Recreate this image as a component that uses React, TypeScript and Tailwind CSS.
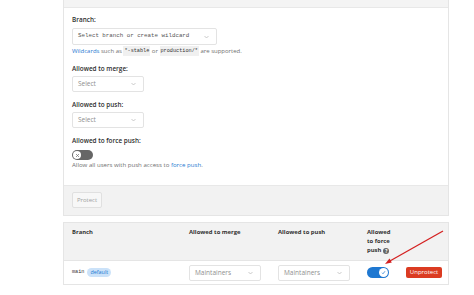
import React from "react";

const sans = { fontFamily: '"Open Sans", "Noto Sans", sans-serif' } as const;

function Caret() {
  return (
    <svg width="5" height="4" viewBox="0 0 10 6" className="shrink-0">
      <path d="M1 1l4 4 4-4" fill="none" stroke="#b5b5b5" strokeWidth="1.4" />
    </svg>
  );
}

function SmallSelect({ label, w }: { label: string; w: string }) {
  return (
    <div className={`${w} h-[16px] flex items-center justify-between border border-[#e3e3e3] rounded-[2px] bg-white pl-[5px] pr-[7px]`}>
      <span className="text-[6.5px] text-[#8f8f8f]">{label}</span>
      <Caret />
    </div>
  );
}

export default function App() {
  return (
    <div className="relative w-[474px] h-[295px] bg-white overflow-hidden text-[#2e2e2e]" style={sans}>
      <div className="ml-[63px] w-[386px]">
        {/* Top panel */}
        <div className="border-x border-b border-[#e5e5e5]">
          <div className="h-[8px] bg-[#f4f4f4] border-b border-[#e8e8e8]" />
          <div className="px-[8px] pt-[7px] pb-[15px] flex flex-col">
            <div className="h-[10px] leading-[10px] text-[6.4px] font-semibold">Branch:</div>
            <div className="mt-[3px] w-[145px] h-[17px] flex items-center justify-between border border-[#e3e3e3] rounded-[2px] pl-[5px] pr-[7px]">
              <span className="text-[5.8px] text-[#555]" style={{ fontFamily: '"Liberation Mono", monospace' }}>
                Select branch or create wildcard
              </span>
              <Caret />
            </div>
            <div className="mt-[1px] h-[10px] leading-[10px] text-[6px] text-[#707070] flex items-center whitespace-nowrap">
              <span className="text-[#1f78d1]">Wildcards</span>
              <span>&nbsp;such as&nbsp;</span>
              <span className="bg-[#f0f0f0] px-[1px] text-[5.2px] text-[#333]" style={{ fontFamily: '"Liberation Mono", monospace' }}>*-stable</span>
              <span>&nbsp;or&nbsp;</span>
              <span className="bg-[#f0f0f0] px-[1px] text-[5.2px] text-[#333]" style={{ fontFamily: '"Liberation Mono", monospace' }}>production/*</span>
              <span>&nbsp;are supported.</span>
            </div>
            <div className="mt-[8px] h-[10px] leading-[10px] text-[6.4px] font-semibold">Allowed to merge:</div>
            <div className="mt-[2px]"><SmallSelect label="Select" w="w-[72px]" /></div>
            <div className="mt-[8px] h-[10px] leading-[10px] text-[6.4px] font-semibold">Allowed to push:</div>
            <div className="mt-[2px]"><SmallSelect label="Select" w="w-[72px]" /></div>
            <div className="mt-[8px] h-[10px] leading-[10px] text-[6.4px] font-semibold">Allowed to force push:</div>
            <div className="mt-[4px] w-[21px] h-[10px] rounded-full bg-[#666] relative">
              <div className="absolute left-[1px] top-[1px] w-[8px] h-[8px] rounded-full bg-white flex items-center justify-center">
                <svg width="5" height="5" viewBox="0 0 10 10">
                  <path d="M2 2l6 6M8 2l-6 6" stroke="#777" strokeWidth="1.5" />
                </svg>
              </div>
            </div>
            <div className="h-[10px] leading-[10px] text-[6.1px] text-[#707070]">
              Allow all users with push access to <span className="text-[#1f78d1]">force push</span>.
            </div>
          </div>
          <div className="border-t border-[#e8e8e8] bg-[#f2f2f2] px-[8px] pt-[6px] pb-[7px]">
            <div className="w-[30px] h-[16px] border border-[#e0e0e0] rounded-[2px] bg-[#f7f7f7] flex items-center justify-center text-[6px] text-[#a0a0a0]">
              Protect
            </div>
          </div>
        </div>

        {/* Table */}
        <div className="mt-[6px] border border-[#e5e5e5]">
          <div className="grid grid-cols-[117px_89px_89px_39px_1fr] bg-[#f2f2f2] border-b border-[#e5e5e5] text-[5.9px] font-bold text-[#333]">
            <div className="pl-[8px] pt-[5px] pb-[5px] leading-[9px]">Branch</div>
            <div className="pl-[8px] pt-[5px] leading-[9px]">Allowed to merge</div>
            <div className="pl-[8px] pt-[5px] leading-[9px]">Allowed to push</div>
            <div className="pl-[8px] pt-[5px] pb-[5px] leading-[9px]">
              <div>Allowed</div>
              <div>to force</div>
              <div className="flex items-center gap-[2px]">
                push
                <span className="w-[6px] h-[6px] rounded-full bg-[#666] text-white text-[4.5px] leading-[6px] text-center">?</span>
              </div>
            </div>
            <div />
          </div>
          <div className="grid grid-cols-[117px_89px_89px_39px_1fr] items-center h-[23px]">
            <div className="pl-[8px] flex items-center gap-[3px]">
              <span className="text-[5.2px] text-[#333]" style={{ fontFamily: '"Liberation Mono", monospace' }}>main</span>
              <span className="px-[3px] h-[9px] leading-[9px] rounded-full bg-[#cbe2f9] text-[#1f78d1] text-[5.4px]">default</span>
            </div>
            <div className="pl-[8px]"><SmallSelect label="Maintainers" w="w-[72px]" /></div>
            <div className="pl-[8px]"><SmallSelect label="Maintainers" w="w-[72px]" /></div>
            <div className="pl-[8px]">
              <div className="w-[22px] h-[11px] rounded-full bg-[#1f78d1] relative">
                <div className="absolute right-[1px] top-[1px] w-[9px] h-[9px] rounded-full bg-white flex items-center justify-center">
                  <svg width="5" height="5" viewBox="0 0 10 10">
                    <path d="M2 5.5l2 2 4-5" fill="none" stroke="#1f78d1" strokeWidth="1.5" />
                  </svg>
                </div>
              </div>
            </div>
            <div className="pl-[8px]">
              <div className="w-[36px] h-[11px] rounded-[2px] bg-[#db3b21] text-white text-[6px] flex items-center justify-center">
                Unprotect
              </div>
            </div>
          </div>
        </div>
      </div>

      {/* Red annotation arrow */}
      <svg className="absolute left-0 top-0 pointer-events-none" width="474" height="295">
        <line x1="443" y1="231" x2="389" y2="261.5" stroke="#d42020" strokeWidth="1.3" />
        <path d="M385 264 L389.5 258.5 L391.8 262.5 Z" fill="#d42020" />
      </svg>
    </div>
  );
}
